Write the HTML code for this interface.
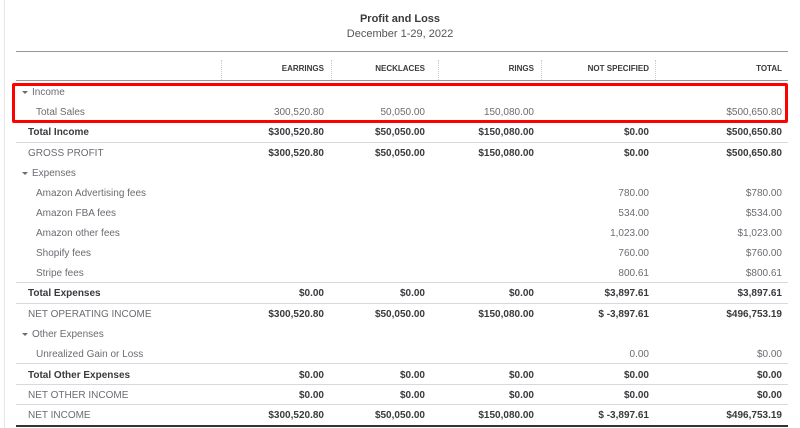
<!DOCTYPE html>
<html><head><style>
body{margin:0;width:800px;height:428px;background:#fff;font-family:"Liberation Sans",sans-serif;position:relative;overflow:hidden}
.a{position:absolute}
.vl{position:absolute;left:4px;top:0;width:1px;height:428px;background:#e6e7ea}
.t{left:0;width:800px;text-align:center;color:#393a3d}
.hl{position:absolute;left:16px;width:772px;height:1px;background:#d8d9dc}
.r{position:absolute;left:16px;width:772px;height:20px;font-size:10px;line-height:20px;color:#6b6c72}
.r span{position:absolute;white-space:nowrap}
.b{color:#393a3d;font-weight:bold}
.c1{right:464px}.c2{right:363px}.c3{right:254px}.c4{right:139px}.c5{right:6px}
.h span{font-size:8px;font-weight:bold;color:#393a3d}
.sep{position:absolute;top:60px;height:20px;border-left:1px dotted #ccc}
.tri{display:inline-block;width:0;height:0;border-left:3px solid transparent;border-right:3px solid transparent;border-top:3px solid #6b6c72;margin-right:4px;vertical-align:middle}
.x{margin-top:2px}
</style></head><body>
<div class="vl"></div>
<div class="a t" style="top:13px;font-size:11px;font-weight:bold">Profit and Loss</div>
<div class="a t" style="top:28px;font-size:11px;color:#555">December 1-29, 2022</div>
<div class="hl" style="top:51px;background:#999;height:1px"></div>
<div class="sep" style="left:221px"></div><div class="sep" style="left:331px"></div><div class="sep" style="left:438px"></div><div class="sep" style="left:541px"></div><div class="sep" style="left:655px"></div>
<div class="r h" style="top:59px"><span class="c1">EARRINGS</span><span class="c2">NECKLACES</span><span class="c3">RINGS</span><span class="c4">NOT SPECIFIED</span><span class="c5">TOTAL</span></div>
<div class="hl" style="top:80px;background:#999"></div>

<div class="r" style="top:83px"><span style="left:6px"><i class="tri"></i>Income</span></div>
<div class="r" style="top:103px"><span style="left:20px">Total Sales</span><span class="c1">300,520.80</span><span class="c2">50,050.00</span><span class="c3">150,080.00</span><span class="c5">$500,650.80</span></div>
<div class="hl" style="top:121px"></div>
<div class="r b" style="top:123px"><span style="left:12px">Total Income</span><span class="c1">$300,520.80</span><span class="c2">$50,050.00</span><span class="c3">$150,080.00</span><span class="c4">$0.00</span><span class="c5">$500,650.80</span></div>
<div class="hl" style="top:142px"></div>
<div class="r" style="top:144px"><span style="left:12px">GROSS PROFIT</span><span class="c1 b">$300,520.80</span><span class="c2 b">$50,050.00</span><span class="c3 b">$150,080.00</span><span class="c4 b">$0.00</span><span class="c5 b">$500,650.80</span></div>
<div class="r" style="top:164px"><span style="left:6px"><i class="tri"></i>Expenses</span></div>
<div class="r" style="top:184px"><span style="left:20px">Amazon Advertising fees</span><span class="c4">780.00</span><span class="c5">$780.00</span></div>
<div class="r" style="top:204px"><span style="left:20px">Amazon FBA fees</span><span class="c4">534.00</span><span class="c5">$534.00</span></div>
<div class="r" style="top:224px"><span style="left:20px">Amazon other fees</span><span class="c4">1,023.00</span><span class="c5">$1,023.00</span></div>
<div class="r" style="top:244px"><span style="left:20px">Shopify fees</span><span class="c4">760.00</span><span class="c5">$760.00</span></div>
<div class="r" style="top:264px"><span style="left:20px">Stripe fees</span><span class="c4">800.61</span><span class="c5">$800.61</span></div>
<div class="hl" style="top:282px"></div>
<div class="r b" style="top:284px"><span style="left:12px">Total Expenses</span><span class="c1">$0.00</span><span class="c2">$0.00</span><span class="c3">$0.00</span><span class="c4">$3,897.61</span><span class="c5">$3,897.61</span></div>
<div class="hl" style="top:303px"></div>
<div class="r" style="top:305px"><span style="left:12px">NET OPERATING INCOME</span><span class="c1 b">$300,520.80</span><span class="c2 b">$50,050.00</span><span class="c3 b">$150,080.00</span><span class="c4 b">$ -3,897.61</span><span class="c5 b">$496,753.19</span></div>
<div class="r" style="top:325px"><span style="left:6px"><i class="tri"></i>Other Expenses</span></div>
<div class="r" style="top:345px"><span style="left:20px">Unrealized Gain or Loss</span><span class="c4">0.00</span><span class="c5">$0.00</span></div>
<div class="hl" style="top:363px"></div>
<div class="r b" style="top:366px"><span style="left:12px">Total Other Expenses</span><span class="c1">$0.00</span><span class="c2">$0.00</span><span class="c3">$0.00</span><span class="c4">$0.00</span><span class="c5">$0.00</span></div>
<div class="hl" style="top:384px"></div>
<div class="r" style="top:386px"><span style="left:12px">NET OTHER INCOME</span><span class="c1 b">$0.00</span><span class="c2 b">$0.00</span><span class="c3 b">$0.00</span><span class="c4 b">$0.00</span><span class="c5 b">$0.00</span></div>
<div class="hl" style="top:404px"></div>
<div class="r" style="top:406px"><span style="left:12px">NET INCOME</span><span class="c1 b">$300,520.80</span><span class="c2 b">$50,050.00</span><span class="c3 b">$150,080.00</span><span class="c4 b">$ -3,897.61</span><span class="c5 b">$496,753.19</span></div>
<div class="hl" style="top:425px;height:2px;background:#333"></div>

<div class="a" style="left:12px;top:83px;width:770px;height:34px;border:3px solid #f00;border-radius:2px"></div>
</body></html>
